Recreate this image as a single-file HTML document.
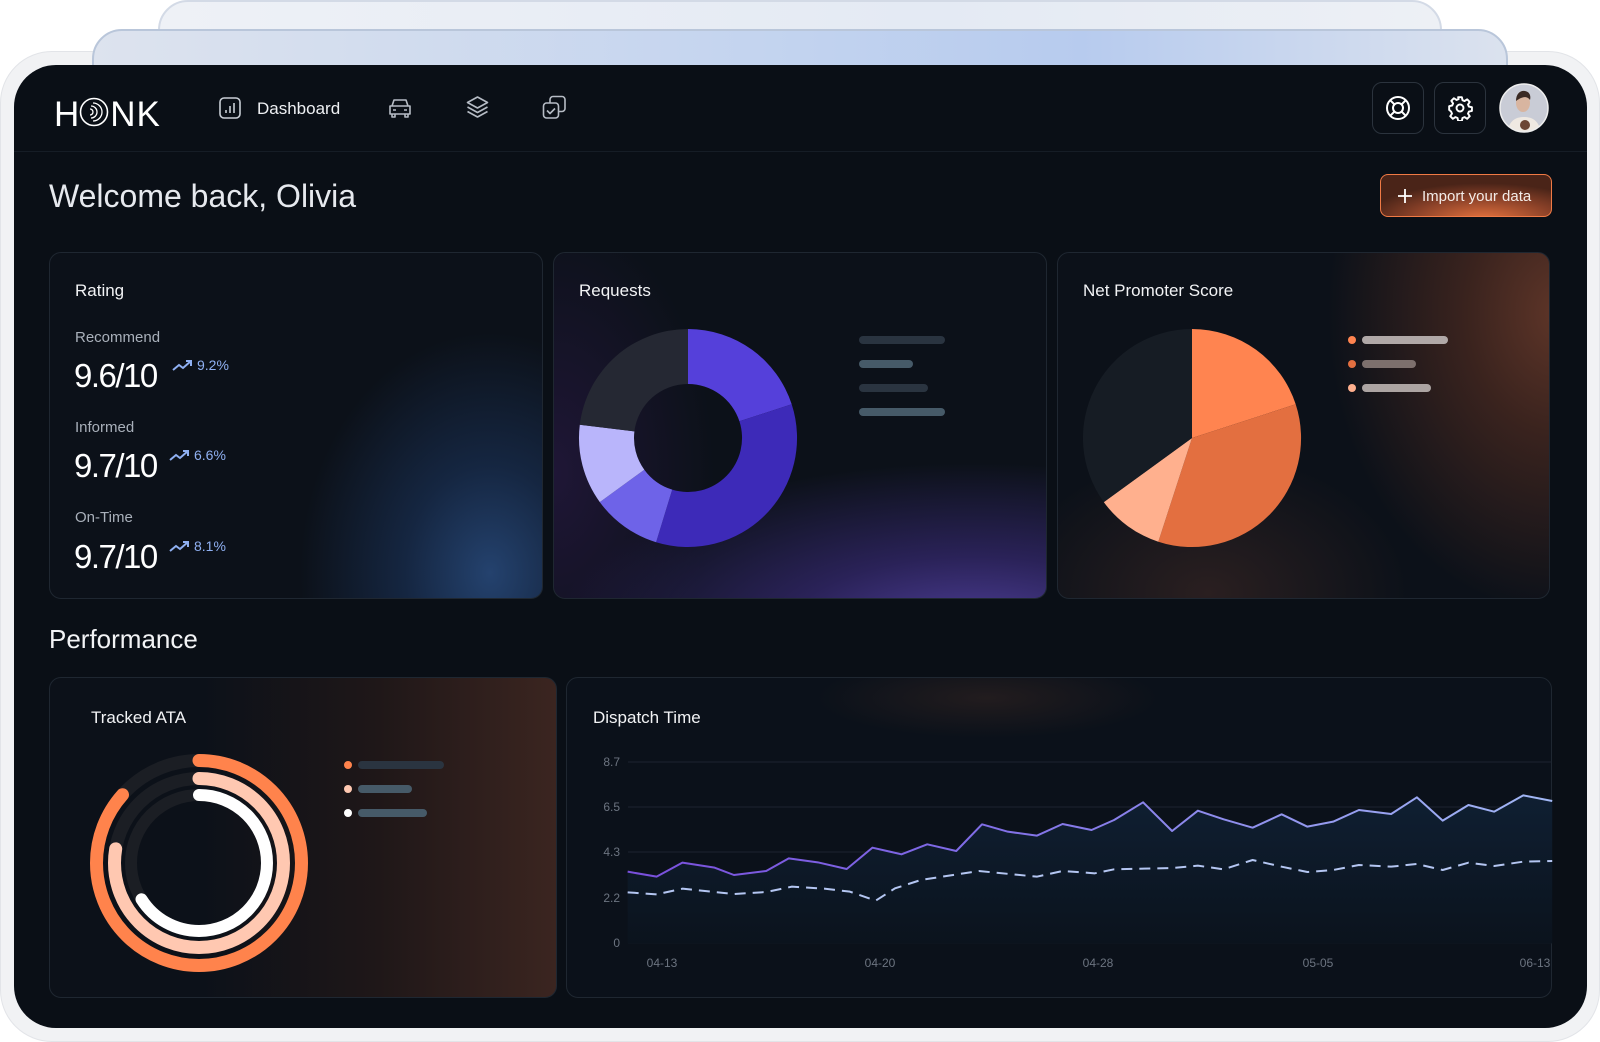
<!DOCTYPE html>
<html><head><meta charset="utf-8"><style>
*{margin:0;padding:0;box-sizing:border-box}
body{width:1600px;height:1042px;background:#fff;position:relative;overflow:hidden;font-family:"Liberation Sans",sans-serif;}
.abs{position:absolute}
.back1{left:158px;top:0;width:1284px;height:120px;border-radius:30px;background:linear-gradient(90deg,#eef1f6,#e4eaf4 60%,#edf0f5);border:2px solid #d3dae6}
.back2{left:92px;top:29px;width:1416px;height:120px;border-radius:30px;background:linear-gradient(90deg,#dde3ee,#c2d3ef 50%,#b7cbee 70%,#dbe2ee);border:2px solid #b9c6da}
.frame{left:0;top:51px;width:1600px;height:991px;border-radius:52px;background:#f1f2f4;border:1px solid #e2e4e8}
.panel{left:14px;top:65px;width:1573px;height:963px;border-radius:42px;background:#0a0f16;overflow:hidden}
.card{position:absolute;border:1px solid #1f2731;border-radius:12px;overflow:hidden;background:#0c1119}
.title{position:absolute;color:#f2f3f5;font-size:17px}
.lbl{position:absolute;color:#a9b0ba;font-size:15px}
.big{position:absolute;color:#fff;font-size:33px;letter-spacing:-1.5px}
.tr{position:absolute;color:#8fb0f2;font-size:14px}
.bar{position:absolute;height:8px;border-radius:4px}
.dot{position:absolute;width:8px;height:8px;border-radius:50%}
</style></head><body>
<div class="abs frame"></div>
<div class="abs back1"></div>
<div class="abs back2"></div>
<div class="abs panel">
 <div class="abs" style="left:0;top:86px;width:1573px;height:1px;background:#161d26"></div>
 <div class="abs" style="left:40px;top:30px;font-size:35px;color:#fff;letter-spacing:1px">H<span style="display:inline-block;width:30px"></span>NK</div>
 <svg class="abs" style="left:64px;top:31px" width="32" height="32" viewBox="0 0 32 32"><circle cx="16" cy="16" r="13.5" fill="none" stroke="#fff" stroke-width="1.6"/><path d="M15 7a9 9 0 0 1 0 18M13 10a6 6 0 0 1 0 12M12 13a3 3 0 0 1 0 6" fill="none" stroke="#fff" stroke-width="1.3"/></svg>
 <svg class="abs" style="left:205px;top:32px" width="22" height="22" viewBox="0 0 22 22" fill="none" stroke="#c9ced6" stroke-width="1.6"><rect x="1" y="1" width="20" height="20" rx="4"/><path d="M7 16v-3M11 16V9M15 16V6"/></svg>
 <div class="abs" style="left:243px;top:34px;color:#eef0f3;font-size:17px">Dashboard</div>
 <svg class="abs" style="left:374px;top:32px" width="24" height="22" viewBox="0 0 24 22" fill="none" stroke="#b6bcc5" stroke-width="1.6" stroke-linejoin="round"><path d="M4 9l2-6h12l2 6M2 9h20v8H2zM4 17v3h3v-3M17 17v3h3v-3M5 13h3M16 13h3"/></svg>
 <svg class="abs" style="left:451px;top:30px" width="25" height="25" viewBox="0 0 25 25" fill="none" stroke="#b6bcc5" stroke-width="1.6" stroke-linejoin="round"><path d="M12.5 2l10 5.5-10 5.5-10-5.5zM2.5 12l10 5.5 10-5.5M2.5 16.5l10 5.5 10-5.5"/></svg>
 <svg class="abs" style="left:528px;top:30px" width="25" height="25" viewBox="0 0 25 25" fill="none" stroke="#b6bcc5" stroke-width="1.6" stroke-linejoin="round"><rect x="8" y="1.5" width="15" height="15" rx="3"/><rect x="1.5" y="8" width="15" height="15" rx="3" fill="#0a0f16"/><path d="M5 15.5l3 3 5-5"/></svg>
 <div class="abs" style="left:1358px;top:17px;width:52px;height:52px;border:1px solid #2b333d;border-radius:10px"></div>
 <svg class="abs" style="left:1371px;top:30px" width="26" height="26" viewBox="0 0 26 26" fill="none" stroke="#fff" stroke-width="2"><circle cx="13" cy="13" r="11"/><circle cx="13" cy="13" r="5"/><path d="M5.2 5.2l4.3 4.3M20.8 5.2l-4.3 4.3M5.2 20.8l4.3-4.3M20.8 20.8l-4.3-4.3"/></svg>
 <div class="abs" style="left:1420px;top:17px;width:52px;height:52px;border:1px solid #2b333d;border-radius:10px"></div>
 <svg class="abs" style="left:1433px;top:30px" width="26" height="26" viewBox="0 0 24 24" fill="none" stroke="#fff" stroke-width="1.8" stroke-linejoin="round"><circle cx="12" cy="12" r="3.2"/><path d="M10.3 2h3.4l.6 2.8 1.9.8 2.4-1.6 2.4 2.4-1.6 2.4.8 1.9 2.8.6v3.4l-2.8.6-.8 1.9 1.6 2.4-2.4 2.4-2.4-1.6-1.9.8-.6 2.8h-3.4l-.6-2.8-1.9-.8-2.4 1.6-2.4-2.4 1.6-2.4-.8-1.9L2 13.7v-3.4l2.8-.6.8-1.9L4 5.4 6.4 3l2.4 1.6 1.9-.8z"/></svg>
 <svg class="abs" style="left:1485px;top:18px" width="50" height="50" viewBox="0 0 50 50"><defs><clipPath id="av"><circle cx="25" cy="25" r="24"/></clipPath></defs><g clip-path="url(#av)"><rect width="50" height="50" fill="#c9ccd6"/><path d="M8 50c2-12 8-16 17-16s15 4 17 16z" fill="#efe9e2"/><ellipse cx="24" cy="20" rx="7" ry="9" fill="#d8b5a0"/><path d="M17 18c0-8 5-11 9-10 5 1 6 5 5 9-2-3-6-5-14 1z" fill="#3a2a24"/><ellipse cx="26" cy="42" rx="5" ry="5" fill="#6b4534"/></g><circle cx="25" cy="25" r="24" fill="none" stroke="#eee" stroke-width="1.5"/></svg>
 <div class="abs" style="left:35px;top:113px;color:#e6e9ee;font-size:32px">Welcome back, Olivia</div>
 <div class="abs" style="left:1366px;top:109px;width:172px;height:43px;border:1.5px solid #f07a45;border-radius:8px;background:radial-gradient(ellipse 70% 90% at 60% 110%,#e8743f,#8a4128 60%,#4a2418);"></div>
 <svg class="abs" style="left:1383px;top:123px" width="16" height="16" viewBox="0 0 16 16" stroke="#fff" stroke-width="1.8"><path d="M8 1v14M1 8h14"/></svg>
 <div class="abs" style="left:1408px;top:123px;color:#f3ece8;font-size:15px">Import your data</div>

 <div class="card" style="left:35px;top:187px;width:494px;height:347px;background:radial-gradient(ellipse 190px 240px at 440px 320px,#24426e,#152641 45%,rgba(12,17,25,0) 100%),#0c1119">
  <div class="title" style="left:25px;top:28px">Rating</div>
  <div class="lbl" style="left:25px;top:76px">Recommend</div>
  <div class="big" style="left:24px;top:104px">9.6/10</div>
  <svg class="abs" style="left:122px;top:106px" width="22" height="14" viewBox="0 0 22 14" fill="none" stroke="#8fb0f2" stroke-width="2"><path d="M1 11l6-5 4 3 8-7M14 2h5v5"/></svg>
  <div class="tr" style="left:147px;top:104px">9.2%</div>
  <div class="lbl" style="left:25px;top:166px">Informed</div>
  <div class="big" style="left:24px;top:194px">9.7/10</div>
  <svg class="abs" style="left:119px;top:196px" width="22" height="14" viewBox="0 0 22 14" fill="none" stroke="#8fb0f2" stroke-width="2"><path d="M1 11l6-5 4 3 8-7M14 2h5v5"/></svg>
  <div class="tr" style="left:144px;top:194px">6.6%</div>
  <div class="lbl" style="left:25px;top:256px">On-Time</div>
  <div class="big" style="left:24px;top:285px">9.7/10</div>
  <svg class="abs" style="left:119px;top:287px" width="22" height="14" viewBox="0 0 22 14" fill="none" stroke="#8fb0f2" stroke-width="2"><path d="M1 11l6-5 4 3 8-7M14 2h5v5"/></svg>
  <div class="tr" style="left:144px;top:285px">8.1%</div>
 </div>

 <div class="card" style="left:539px;top:187px;width:494px;height:347px;background:radial-gradient(ellipse 420px 170px at 420px 380px,#4e3f98,#2a2258 45%,rgba(12,17,25,0) 100%),radial-gradient(ellipse 160px 260px at 0px 220px,#1f1636,rgba(12,17,25,0)),#0c1119">
  <div class="title" style="left:25px;top:28px">Requests</div>
  <svg class="abs" style="left:0;top:0" width="494" height="347" viewBox="0 0 494 347">
   <g transform="translate(134,185)">
    <path d="M0,-109 A109,109 0 0 1 103.7,-33.7 L51.4,-16.7 A54,54 0 0 0 0,-54Z" fill="#5540da"/>
    <path d="M103.7,-33.7 A109,109 0 0 1 -31.9,104.2 L-15.8,51.6 A54,54 0 0 0 51.4,-16.7Z" fill="#3d2ab8"/>
    <path d="M-31.9,104.2 A109,109 0 0 1 -88.2,64.1 L-43.7,31.7 A54,54 0 0 0 -15.8,51.6Z" fill="#6e63e8"/>
    <path d="M-88.2,64.1 A109,109 0 0 1 -108.2,-13.3 L-53.6,-6.6 A54,54 0 0 0 -43.7,31.7Z" fill="#b9b5fb"/>
    <path d="M-108.2,-13.3 A109,109 0 0 1 0,-109 L0,-54 A54,54 0 0 0 -53.6,-6.6Z" fill="#252833"/>
   </g>
  </svg>
  <div class="bar" style="left:305px;top:83px;width:86px;background:#2a3440"></div>
  <div class="bar" style="left:305px;top:107px;width:54px;background:#465a68"></div>
  <div class="bar" style="left:305px;top:131px;width:69px;background:#2a3440"></div>
  <div class="bar" style="left:305px;top:155px;width:86px;background:#465a68"></div>
 </div>

 <div class="card" style="left:1043px;top:187px;width:493px;height:347px;background:radial-gradient(ellipse 230px 300px at 500px 60px,#5e3528,#3a231e 40%,rgba(12,17,25,0) 100%),radial-gradient(ellipse 200px 140px at 150px 340px,#2a1f20,rgba(12,17,25,0)),#0c1119">
  <div class="title" style="left:25px;top:28px">Net Promoter Score</div>
  <svg class="abs" style="left:0;top:0" width="493" height="347" viewBox="0 0 493 347">
   <g transform="translate(134,185)">
    <path d="M0,0 L0,-109 A109,109 0 0 1 103.7,-33.7Z" fill="#ff8450"/>
    <path d="M0,0 L103.7,-33.7 A109,109 0 0 1 -33.7,103.7Z" fill="#e36f40"/>
    <path d="M0,0 L-33.7,103.7 A109,109 0 0 1 -88.2,64.1Z" fill="#ffb08e"/>
    <path d="M0,0 L-88.2,64.1 A109,109 0 0 1 0,-109Z" fill="#161c24"/>
   </g>
  </svg>
  <div class="dot" style="left:290px;top:83px;background:#ff8450"></div>
  <div class="dot" style="left:290px;top:107px;background:#e36f40"></div>
  <div class="dot" style="left:290px;top:131px;background:#ffb08e"></div>
  <div class="bar" style="left:304px;top:83px;width:86px;background:#b0a8a7"></div>
  <div class="bar" style="left:304px;top:107px;width:54px;background:#7d706d"></div>
  <div class="bar" style="left:304px;top:131px;width:69px;background:#aca4a2"></div>
 </div>

 <div class="abs" style="left:35px;top:559px;color:#f2f3f5;font-size:26px">Performance</div>

 <div class="card" style="left:35px;top:612px;width:508px;height:321px;background:linear-gradient(90deg,rgba(12,17,25,0) 30%,#1f1718 65%,#3b2520 100%),#0c1119">
  <div class="title" style="left:41px;top:30px">Tracked ATA</div>
  <svg class="abs" style="left:0;top:0" width="508" height="321" viewBox="0 0 508 321">
   <g transform="translate(149,185)" fill="none" stroke-linecap="round">
    <circle r="102.5" stroke="#1b1e24" stroke-width="13"/>
    <circle r="84.5" stroke="#1b1e24" stroke-width="13"/>
    <circle r="68" stroke="#1b1e24" stroke-width="12"/>
    <circle r="102.5" stroke="#ff834c" stroke-width="13" pathLength="360" stroke-dasharray="312 400" transform="rotate(-90)"/>
    <circle r="84.5" stroke="#ffc8b1" stroke-width="13" pathLength="360" stroke-dasharray="280 400" transform="rotate(-90)"/>
    <circle r="68" stroke="#ffffff" stroke-width="12" pathLength="360" stroke-dasharray="238 400" transform="rotate(-90)"/>
   </g>
  </svg>
  <div class="dot" style="left:294px;top:83px;background:#ff834c"></div>
  <div class="dot" style="left:294px;top:107px;background:#ffc8b1"></div>
  <div class="dot" style="left:294px;top:131px;background:#fff"></div>
  <div class="bar" style="left:308px;top:83px;width:86px;background:#2a3440"></div>
  <div class="bar" style="left:308px;top:107px;width:54px;background:#465a68"></div>
  <div class="bar" style="left:308px;top:131px;width:69px;background:#465a68"></div>
 </div>

 <div class="card" style="left:552px;top:612px;width:986px;height:321px;background:radial-gradient(ellipse 170px 40px at 420px 20px,#221c1e,rgba(12,17,25,0)),#0b111a">
  <div class="title" style="left:26px;top:30px">Dispatch Time</div>
 </div>
 <svg class="abs" style="left:-14px;top:-65px" width="1600" height="1042" viewBox="0 0 1600 1042">
  <defs>
   <linearGradient id="lg" x1="0" x2="1"><stop offset="0" stop-color="#7a4fdc"/><stop offset="0.35" stop-color="#7f6ae6"/><stop offset="1" stop-color="#a2b8f5"/></linearGradient>
   <linearGradient id="fg" x1="0" y1="0" x2="0" y2="1"><stop offset="0" stop-color="#0f1f32"/><stop offset="1" stop-color="#0b131d"/></linearGradient>
  </defs>
  <g font-family="Liberation Sans" font-size="12" fill="#6c7480" text-anchor="end">
   <text x="620" y="766">8.7</text><text x="620" y="811">6.5</text><text x="620" y="856">4.3</text><text x="620" y="902">2.2</text><text x="620" y="947">0</text>
  </g>
  <g stroke="#1c2430" stroke-width="1"><path d="M628 762H1552M628 807H1552M628 852H1552M628 898H1552M628 943H1552"/></g>
  <g font-family="Liberation Sans" font-size="12" fill="#6c7480" text-anchor="middle">
   <text x="662" y="967">04-13</text><text x="880" y="967">04-20</text><text x="1098" y="967">04-28</text><text x="1318" y="967">05-05</text><text x="1535" y="967">06-13</text>
  </g>
  <g transform="translate(560,670) scale(0.6443,0.33333)">
   <path d="M105,605 L150,620 190,578 240,593 270,615 320,603 355,565 400,577 445,597 485,533 530,553 570,523 615,543 655,463 695,485 740,497 780,462 825,480 860,450 905,397 950,483 990,422 1030,448 1075,473 1120,433 1160,470 1200,455 1240,420 1290,432 1330,382 1370,452 1410,405 1450,425 1495,376 1540,393 L1540,820 L105,820Z" fill="url(#fg)"/>
   <path d="M105,605 L150,620 190,578 240,593 270,615 320,603 355,565 400,577 445,597 485,533 530,553 570,523 615,543 655,463 695,485 740,497 780,462 825,480 860,450 905,397 950,483 990,422 1030,448 1075,473 1120,433 1160,470 1200,455 1240,420 1290,432 1330,382 1370,452 1410,405 1450,425 1495,376 1540,393" fill="none" stroke="url(#lg)" stroke-width="2" stroke-linejoin="round" vector-effect="non-scaling-stroke"/>
   <path d="M105,667 L150,673 190,656 270,672 320,666 360,650 410,656 450,665 490,692 520,655 560,630 650,603 740,620 780,603 830,610 860,598 950,594 990,587 1030,598 1075,570 1120,590 1160,606 1200,600 1240,585 1290,590 1330,582 1370,600 1410,578 1450,588 1495,575 1540,573" fill="none" stroke="#b4c6f2" stroke-width="2" stroke-dasharray="11 7" stroke-linejoin="round" vector-effect="non-scaling-stroke"/>
  </g>
 </svg>
</div>
</body></html>
